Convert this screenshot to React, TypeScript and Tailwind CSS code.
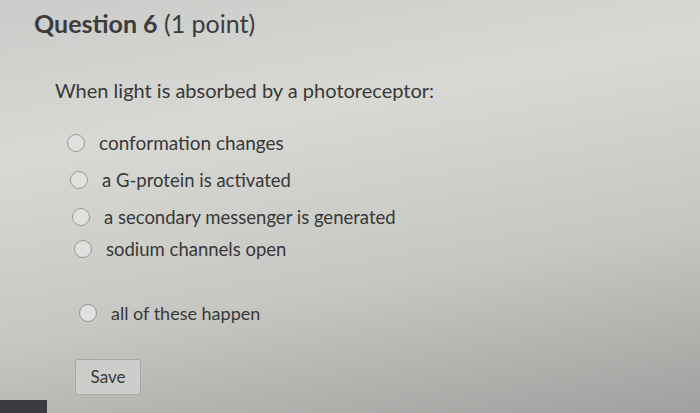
import React from "react";

const Radio = () => (
  <span className="inline-block w-[18px] h-[18px] rounded-full border border-[#9a9a98] bg-[#e0e0de] shrink-0" />
);

const Option = ({ text, cls }: { text: string; cls: string }) => (
  <div className={`flex items-center gap-[14px] leading-[24px] text-[#383838] ${cls}`}>
    <Radio />
    <span>{text}</span>
  </div>
);

export default function App() {
  return (
    <div
      className="relative w-[700px] h-[413px] overflow-hidden bg-[linear-gradient(170deg,#cbcbc9_0%,#d8d8d5_30%,#c6c6c3_65%,#a0a09e_100%)]"
      style={{ fontFamily: "Lato, 'Open Sans', sans-serif" }}
    >
      <div className="pl-[34px] pt-[8px]">
        <h1 className="text-[25px] leading-[30px] text-[#3c3c3c]">
          <span className="font-bold">Question 6</span> (1 point)
        </h1>
        <p className="ml-[21px] mt-[40px] text-[20px] leading-[24px] text-[#383838]">
          When light is absorbed by a photoreceptor:
        </p>
        <div className="flex flex-col">
          <Option text="conformation changes" cls="ml-[33px] mt-[29px] text-[19px]" />
          <Option text="a G-protein is activated" cls="ml-[36px] mt-[13px] text-[18.5px]" />
          <Option text="a secondary messenger is generated" cls="ml-[38px] mt-[13px] text-[18.5px]" />
          <Option text="sodium channels open" cls="ml-[40px] mt-[8px] text-[18.5px]" />
          <Option text="all of these happen" cls="ml-[45px] mt-[40px] text-[18px]" />
        </div>
        <button className="ml-[41px] mt-[34px] w-[66px] h-[36px] rounded-[3px] border border-[#a8a8a6] bg-[#cdcdcb] text-[17px] text-[#383838]">
          Save
        </button>
      </div>
      <div className="absolute left-0 bottom-0 w-[47px] h-[13px] bg-[#3a3c3f]" />
    </div>
  );
}
